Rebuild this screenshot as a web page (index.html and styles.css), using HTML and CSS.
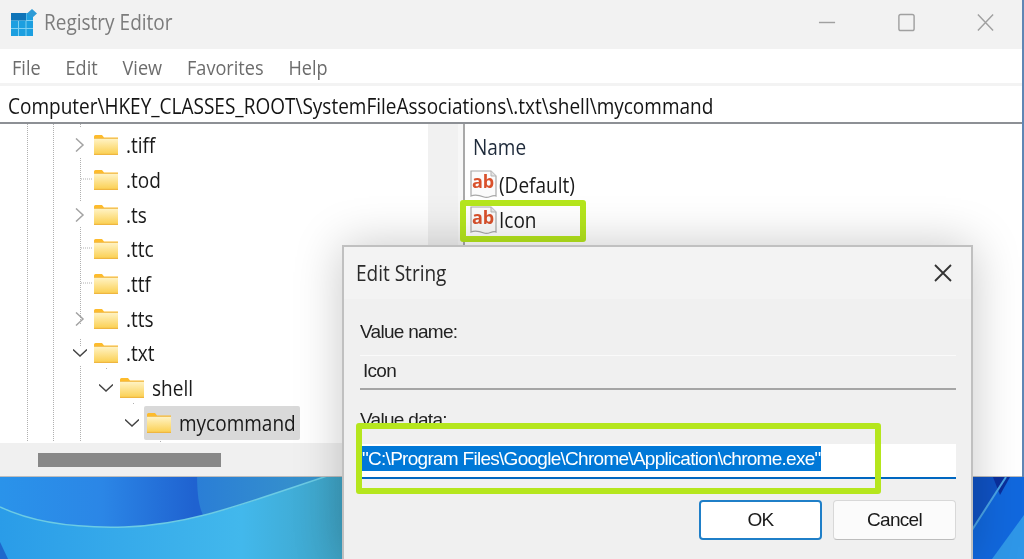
FILE: index.html
```html
<!DOCTYPE html>
<html lang="en">
<head>
<meta charset="utf-8">
<title>Registry Editor</title>
<link rel="stylesheet" href="styles.css">
</head>
<body>
<svg class="wallpaper" viewBox="0 0 1024 559" preserveAspectRatio="none" aria-hidden="true">
  <defs>
    <linearGradient id="wpBase" x1="0" y1="0" x2="1" y2="0"><stop offset="0" stop-color="#2a93ea"/><stop offset=".1" stop-color="#2b86e6"/><stop offset=".19" stop-color="#1f62d0"/></linearGradient>
    <linearGradient id="wpLow" x1="0" y1="0" x2="1" y2="0"><stop offset="0" stop-color="#2a9ce8"/><stop offset=".7" stop-color="#42b8ec"/><stop offset="1" stop-color="#3fa3c4"/></linearGradient>
    <linearGradient id="wpArch" x1="0" y1="0" x2="1" y2="0"><stop offset="0" stop-color="#2a7ed6"/><stop offset="1" stop-color="#3a98c8"/></linearGradient>
  </defs>
  <rect width="1024" height="559" fill="url(#wpBase)"/>
  <path d="M197 470 C197 490 198 505 203 515 C250 503 290 490 345 470Z" fill="url(#wpArch)"/>
  <path d="M0 507 C40 526 90 528 125 527 C190 525 240 505 345 470 V559 H0Z" fill="url(#wpLow)"/>
  <path d="M0 507 C40 526 90 528 125 527 C190 525 240 505 345 470" fill="none" stroke="#6ccbe4" stroke-width="1.500"/>
  <path d="M0 542 L8 559 H0Z" fill="#1f68cc"/>
  <rect x="972" y="470" width="52" height="89" fill="#1168de"/>
  <path d="M972 477 H1006 L972 530Z" fill="#0f52c4"/>
  <path d="M993 477 H1010 L1000 495Z" fill="#0a2f9c"/>
  <path d="M1006 477 L972 530" stroke="#4aa4e6" stroke-width="2"/>
  <path d="M1024 515 L992 559 H1024Z" fill="#2f97e8"/>
  <rect x="1022" y="0" width="2" height="477" fill="#5f86b4"/>
</svg>

<main class="regedit">
  <header class="titlebar">
    <svg class="app-icon" viewBox="0 0 27 27" aria-hidden="true">
      <rect x="0" y="4" width="22" height="23" fill="#1c9fe0"/>
      <path d="M7.500 4V27M15 4V27M0 11.500H22M0 19.500H22" stroke="#7fd0f2" stroke-width="1"/>
      <rect x="0" y="4" width="15" height="7.500" fill="#0f74b8"/>
      <path d="M21 0l5 4.500-5 4.500-5-4.500z" fill="#2e9bd6"/>
    </svg>
    <span class="app-name squeeze">Registry Editor</span>
    <div class="win-controls">
      <svg class="win-btn" viewBox="0 0 20 20" aria-hidden="true"><path d="M1 10H18" stroke="#a0a0a0" stroke-width="1.500"/></svg>
      <svg class="win-btn" viewBox="0 0 20 20" aria-hidden="true"><rect x="2" y="1.500" width="16" height="17" rx="2" fill="none" stroke="#a0a0a0" stroke-width="1.500"/></svg>
      <svg class="win-btn" viewBox="0 0 20 20" aria-hidden="true"><path d="M2 1.500L18 18.500M18 1.500L2 18.500" stroke="#a0a0a0" stroke-width="1.500"/></svg>
    </div>
  </header>

  <nav class="menubar">
    <div class="menu-items squeeze"><span>File</span><span>Edit</span><span>View</span><span>Favorites</span><span>Help</span></div>
  </nav>

  <div class="address"><span class="squeeze">Computer\HKEY_CLASSES_ROOT\SystemFileAssociations\.txt\shell\mycommand</span></div>

  <section class="panes">
    <div class="tree-pane">
      <div class="tree-scroll">
        <svg class="guides" aria-hidden="true">
          <path d="M27.500 0V318M53.500 0V318M80.500 0V4M80.500 34V78M80.500 103V200M80.500 215V222M80.500 242V318M106.500 244V246M133.500 279V281M160.500 315V318M81 55H93M81 124H93M81 159H93" stroke="#b0b0b0" stroke-width="1" stroke-dasharray="1 1" fill="none"/>
        </svg>
        <ul class="tree">
          <li class="node lvl0"><svg class="chev" viewBox="0 0 14 14"><path d="M3 0.500L10 7L3 13.500" fill="none" stroke="#a3a3a3" stroke-width="1.500"/></svg><svg class="folder" viewBox="0 0 24 20"><use href="#fld"/></svg><span class="squeeze">.tiff</span></li>
          <li class="node lvl0"><i class="chev"></i><svg class="folder" viewBox="0 0 24 20"><use href="#fld"/></svg><span class="squeeze">.tod</span></li>
          <li class="node lvl0"><svg class="chev" viewBox="0 0 14 14"><path d="M3 0.500L10 7L3 13.500" fill="none" stroke="#a3a3a3" stroke-width="1.500"/></svg><svg class="folder" viewBox="0 0 24 20"><use href="#fld"/></svg><span class="squeeze">.ts</span></li>
          <li class="node lvl0"><i class="chev"></i><svg class="folder" viewBox="0 0 24 20"><use href="#fld"/></svg><span class="squeeze">.ttc</span></li>
          <li class="node lvl0"><i class="chev"></i><svg class="folder" viewBox="0 0 24 20"><use href="#fld"/></svg><span class="squeeze">.ttf</span></li>
          <li class="node lvl0"><svg class="chev" viewBox="0 0 14 14"><path d="M3 0.500L10 7L3 13.500" fill="none" stroke="#a3a3a3" stroke-width="1.500"/></svg><svg class="folder" viewBox="0 0 24 20"><use href="#fld"/></svg><span class="squeeze">.tts</span></li>
          <li class="node lvl0"><svg class="chev" viewBox="0 0 14 14"><path d="M0 3.500L7 10L14 3.500" fill="none" stroke="#444" stroke-width="1.500"/></svg><svg class="folder" viewBox="0 0 24 20"><use href="#fld"/></svg><span class="squeeze">.txt</span></li>
          <li class="node lvl1"><svg class="chev" viewBox="0 0 14 14"><path d="M0 3.500L7 10L14 3.500" fill="none" stroke="#444" stroke-width="1.500"/></svg><svg class="folder" viewBox="0 0 24 20"><use href="#fld"/></svg><span class="squeeze">shell</span></li>
          <li class="node lvl2 selected"><svg class="chev" viewBox="0 0 14 14"><path d="M0 3.500L7 10L14 3.500" fill="none" stroke="#444" stroke-width="1.500"/></svg><span class="sel"><svg class="folder" viewBox="0 0 24 20"><use href="#fld"/></svg><span class="squeeze">mycommand</span></span></li>
        </ul>
        <div class="tree-track"></div>
      </div>
      <div class="hscroll"><div class="hthumb"></div></div>
    </div>
    <div class="splitter"></div>
    <div class="values">
      <div class="col-head"><span class="squeeze">Name</span></div>
      <div class="val"><svg class="ab" viewBox="0 0 27 29"><use href="#abic"/><text x="2" y="18" class="ab-text">ab</text></svg><span class="squeeze">(Default)</span></div>
      <div class="val"><svg class="ab" viewBox="0 0 27 29"><use href="#abic"/><text x="2" y="18" class="ab-text">ab</text></svg><span class="squeeze">Icon</span></div>
    </div>
  </section>
</main>

<svg class="defs" aria-hidden="true">
  <defs>
    <linearGradient id="fg" x1="0" y1="0" x2="0" y2="1"><stop offset="0" stop-color="#fff3c4"/><stop offset="1" stop-color="#fbd156"/></linearGradient>
    <symbol id="fld" viewBox="0 0 24 20">
      <path d="M0 1.500Q0 0 1.500 0H8L10 2.500H24V5H0Z" fill="#fdbb2c"/>
      <rect x="0" y="3" width="24" height="17" fill="#efb640"/>
      <rect x="0" y="3.800" width="24" height="15" fill="url(#fg)"/>
    </symbol>
    <symbol id="abic" viewBox="0 0 27 29">
      <path d="M1 1H21L26 6V26C22 24 19 29 14 27C9 25 5 24 1 26Z" fill="#fbfbfb" stroke="#a8a8a8" stroke-width="1.200"/>
      <path d="M21 1V6H26" fill="#e4e4e4" stroke="#b5b5b5"/>
    </symbol>
  </defs>
</svg>

<div class="mark mark-icon"></div>

<section class="dialog">
  <header class="dlg-title">
    <span class="squeeze">Edit String</span>
    <svg class="dlg-close" viewBox="0 0 18 18" aria-hidden="true"><path d="M1 1L17 17M17 1L1 17" stroke="#333" stroke-width="1.800"/></svg>
  </header>
  <div class="dlg-body">
    <label class="dlg-label">Value name:</label>
    <div class="field field-name">Icon</div>
    <label class="dlg-label label-data">Value data:</label>
    <div class="field field-data"><span class="selection">"C:\Program Files\Google\Chrome\Application\chrome.exe"</span></div>
    <div class="dlg-actions">
      <button class="btn btn-primary">OK</button>
      <button class="btn">Cancel</button>
    </div>
  </div>
</section>

<div class="mark mark-data"></div>
</body>
</html>
```

FILE: styles.css
```css
* { box-sizing: border-box; }
html, body { margin: 0; height: 559px; overflow: hidden; }
body {
  position: relative;
  width: 1024px;
  font-family: "Open Sans", "Noto Sans", sans-serif;
  font-size: 21px;
  color: #1a1a1a;
  background: #2a75d8;
  filter: blur(.35px);
}
.wallpaper { position: absolute; inset: 0; width: 1024px; height: 559px; }
.defs { position: absolute; width: 0; height: 0; }

/* The capture is horizontally compressed, so its text runs narrower than the font does */
.squeeze {
  display: inline-block;
  white-space: nowrap;
  transform: scaleX(.905);
  transform-origin: 0 50%;
}

.regedit {
  position: relative;
  width: 1022px;
  height: 477px;
  background: #fff;
  display: flex;
  flex-direction: column;
  border-bottom: 1px solid #bdbdbd;
}
.titlebar {
  height: 49px;
  background: #f2f2f2;
  display: flex;
  align-items: center;
  padding-left: 11px;
  flex: none;
}
.app-icon { width: 27px; height: 27px; flex: none; margin-top: -5px; }
.app-name { margin-left: 6px; color: #7c7c7c; margin-top: -6px; }
.win-controls { margin-left: auto; display: flex; gap: 60px; padding-right: 27px; margin-top: -5px; }
.win-btn { width: 19px; height: 19px; }

.menubar {
  height: 37px;
  flex: none;
  display: flex;
  align-items: center;
  padding: 2px 0 0 12px;
  font-size: 20px;
  color: #6c6c6c;
  border-bottom: 3px solid #f3f3f3;
}
.menu-items { display: flex; gap: 27.500px; }
.address {
  height: 38px;
  flex: none;
  padding: 3px 0 0 8px;
  display: flex;
  align-items: center;
  color: #141414;
  border-bottom: 2px solid #8d9095;
}

.panes { flex: 1; display: flex; min-height: 0; }
.tree-pane { width: 458px; flex: none; display: flex; flex-direction: column; }
.tree-scroll { position: relative; flex: 1; min-height: 0; overflow: hidden; }
.guides { position: absolute; left: 0; top: 0; width: 428px; height: 318px; }
.tree {
  position: relative;
  list-style: none;
  margin: 0;
  padding: 4px 0 0;
  width: 428px;
}
.tree-track { position: absolute; right: 0; top: 0; bottom: 0; width: 30px; background: #f1f1f1; }
.node { height: 34.700px; display: flex; align-items: center; }
.lvl0 { padding-left: 73px; }
.lvl1 { padding-left: 99px; }
.lvl2 { padding-left: 125px; }
.chev { width: 14px; height: 14px; flex: none; margin-right: 7px; display: block; }
.folder { width: 24px; height: 20px; flex: none; margin-right: 8px; }
.sel {
  display: flex;
  align-items: center;
  width: 156px;
  height: 34px;
  margin-left: -2px;
  padding-left: 3px;
  overflow: hidden;
  background: #d9d9d9;
  border-radius: 2px;
}
.hscroll { height: 33px; flex: none; background: #f0f0f0; display: flex; align-items: center; padding-left: 38px; }
.hthumb { width: 183px; height: 14px; background: #888; }

.splitter { width: 7px; flex: none; background: #f7f7f7; border-right: 2px solid #a9a9a9; }
.values { flex: 1; padding: 4px 0 0 8px; }
.col-head { height: 38px; display: flex; align-items: center; color: #1e2a3a; }
.val { height: 35.500px; display: flex; align-items: center; margin-left: -3px; padding-top: 2px; }
.ab { width: 27px; height: 29px; flex: none; margin-right: 2px; }
.ab-text { font-weight: 700; font-size: 18px; fill: #d9512c; }

/* Annotation rectangles and the dialog sit over the window */
.mark { position: absolute; border: 6px solid #b5e61d; border-radius: 3px; pointer-events: none; }
.mark-icon { left: 460px; top: 200px; width: 126px; height: 42px; }
.mark-data { left: 356px; top: 423px; width: 525px; height: 71px; }

.dialog {
  position: absolute;
  left: 342px;
  top: 245px;
  width: 631px;
  height: 314px;
  background: #f0f0f0;
  border: 2px solid #c0c0c0;
  border-bottom: 0;
  box-shadow: 0 0 45px rgba(0, 0, 0, .22);
}
.dlg-title {
  height: 52px;
  background: #f3f3f3;
  display: flex;
  align-items: center;
  justify-content: space-between;
  padding: 0 19px 0 12px;
  color: #2a2a2a;
}
.dlg-close { width: 18px; height: 18px; }
.dlg-body {
  padding: 22px 15px 0 16px;
  display: flex;
  flex-direction: column;
  font-family: "Liberation Sans", Arial, sans-serif;
  font-size: 19px;
  letter-spacing: -.72px;
}
.dlg-label { height: 22px; line-height: 22px; color: #222; }
.field { height: 35px; margin-top: 12px; padding-left: 2px; display: flex; align-items: center; }
.field-name { background: #f0f0f0; border-top: 1px solid #fafafa; border-bottom: 2px solid #a5a5a5; padding: 0 0 2px 3px; color: #222; }
.label-data { margin-top: 19px; }
.field-data { margin-top: 13px; background: #fff; border-bottom: 2px solid #0067c0; align-items: flex-start; padding-top: 2px; }
.selection { background: #0078d7; color: #fff; height: 25px; line-height: 25px; white-space: nowrap; }
.dlg-actions { display: flex; justify-content: flex-end; gap: 11px; margin-top: 21px; }
.btn {
  width: 123px;
  height: 40px;
  font: inherit;
  letter-spacing: inherit;
  color: #1a1a1a;
  background: #fbfbfb;
  border: 1px solid #d8d8d8;
  border-bottom-color: #bdbdbd;
  border-radius: 4px;
  padding: 0;
}
.btn-primary { background: #fff; border: 2px solid #1f7fc8; }
```
